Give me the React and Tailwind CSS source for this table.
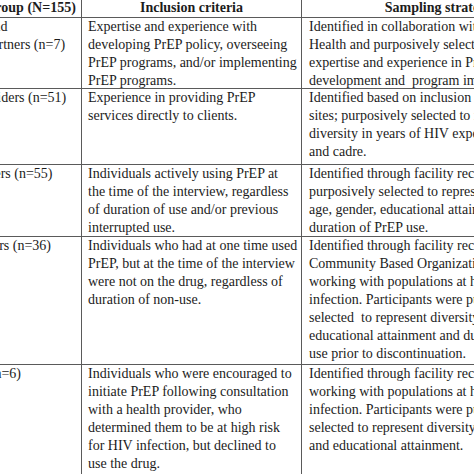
import React from "react";

const rows = [
  {
    h: "h-[71px]",
    group: ["Policy makers and", "implementing partners (n=7)"],
    criteria: [
      "Expertise and experience with",
      "developing PrEP policy, overseeing",
      "PrEP programs, and/or implementing",
      "PrEP programs.",
    ],
    sampling: [
      "Identified in collaboration with the Ministry of",
      "Health and purposively selected based on",
      "expertise and experience in PrEP policy",
      "development and  program implementation.",
    ],
  },
  {
    h: "h-[76px]",
    group: ["Health care providers (n=51)"],
    criteria: ["Experience in providing PrEP", "services directly to clients."],
    sampling: [
      "Identified based on inclusion criteria at study",
      "sites; purposively selected to represent",
      "diversity in years of HIV experience",
      "and cadre.",
    ],
  },
  {
    h: "h-[72px]",
    group: ["Current PrEP users (n=55)"],
    criteria: [
      "Individuals actively using PrEP at",
      "the time of the interview, regardless",
      "of duration of use and/or previous",
      "interrupted use.",
    ],
    sampling: [
      "Identified through facility records and",
      "purposively selected to represent diversity in",
      "age, gender, educational attainment and",
      "duration of PrEP use.",
    ],
  },
  {
    h: "h-[128px]",
    group: ["Former PrEP users (n=36)"],
    criteria: [
      "Individuals who had at one time used",
      "PrEP, but at the time of the interview",
      "were not on the drug, regardless of",
      "duration of non-use.",
    ],
    sampling: [
      "Identified through facility records and",
      "Community Based Organizations",
      "working with populations at high risk for HIV",
      "infection. Participants were purposively",
      "selected  to represent diversity in age, gender,",
      "educational attainment and duration of PrEP",
      "use prior to discontinuation.",
    ],
  },
  {
    h: "h-[130px]",
    group: ["PrEP decliners (n=6)"],
    criteria: [
      "Individuals who were encouraged to",
      "initiate PrEP following consultation",
      "with a health provider, who",
      "determined them to be at high risk",
      "for HIV infection, but declined to",
      "use the drug.",
    ],
    sampling: [
      "Identified through facility records and CBOs",
      "working with populations at high risk for HIV",
      "infection. Participants were purposively",
      "selected to represent diversity in age, gender",
      "and educational attainment.",
    ],
  },
];

const Lines = ({ lines }) =>
  lines.map((l, i) => (
    <div key={i} className="whitespace-pre">
      {l}
    </div>
  ));

export default function App() {
  return (
    <div
      className="w-[474px] h-[474px] overflow-hidden bg-white text-[#1c1c1c] text-[14px] leading-[18px]"
      style={{ fontFamily: '"Liberation Serif", "Times New Roman", serif' }}
    >
      <div className="-ml-[102px] -mt-[1px] w-[700px]">
        {/* header */}
        <div className="flex h-[19px] border-b border-[#5a5a5a] font-bold">
          <div className="w-[184px] shrink-0 border-r border-[#5a5a5a] text-center pl-[14px]">
            Participant group (N=155)
          </div>
          <div className="w-[220px] shrink-0 border-r border-[#5a5a5a] text-center">
            Inclusion criteria
          </div>
          <div className="w-[274px] shrink-0 text-center">Sampling strategy</div>
        </div>

        {rows.map((r, i) => (
          <div key={i} className={`flex border-b border-[#5a5a5a] ${r.h}`}>
            <div className="w-[184px] shrink-0 border-r border-[#5a5a5a] pl-[6px]">
              <Lines lines={r.group} />
            </div>
            <div className="w-[220px] shrink-0 border-r border-[#5a5a5a] pl-[6px]">
              <Lines lines={r.criteria} />
            </div>
            <div className="w-[274px] shrink-0 pl-[7px]">
              <Lines lines={r.sampling} />
            </div>
          </div>
        ))}
      </div>
    </div>
  );
}
